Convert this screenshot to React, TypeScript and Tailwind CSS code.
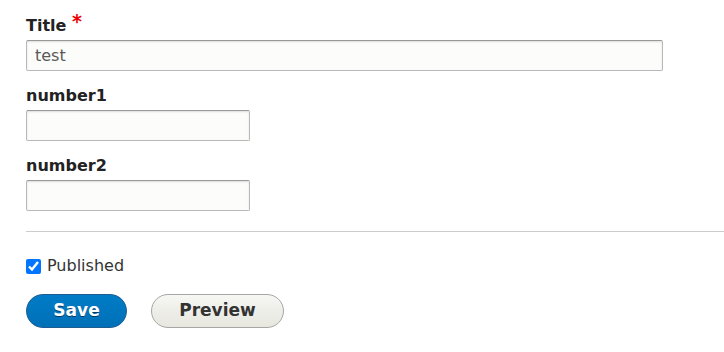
import React, { useState } from 'react';

const inputCls =
  'block h-[31px] rounded-[2px] border border-[#b8b8b8] border-t-[#999] bg-[#fcfcfa] px-[8px] text-[16px] text-[#595959] shadow-[inset_0_1px_2px_rgba(0,0,0,0.125)] outline-none';

const labelCls = 'mb-[3px] block text-[16px] font-bold leading-[22px] text-[#222]';

const App: React.FC = () => {
  const [title, setTitle] = useState('test');
  const [n1, setN1] = useState('');
  const [n2, setN2] = useState('');
  const [published, setPublished] = useState(true);

  return (
    <div className="min-h-[352px] bg-white pl-[26px] pt-[15px] text-[#333] font-['DejaVu_Sans',sans-serif]">
      <div className="mb-[14px]">
        <label className={labelCls}>
          Title <span className="relative -top-[3px] text-[19px] leading-none text-[#e00]">*</span>
        </label>
        <input className={`${inputCls} w-[637px]`} value={title} onChange={(e) => setTitle(e.target.value)} />
      </div>

      <div className="mb-[14px]">
        <label className={labelCls}>number1</label>
        <input className={`${inputCls} w-[224px]`} value={n1} onChange={(e) => setN1(e.target.value)} />
      </div>

      <div>
        <label className={labelCls}>number2</label>
        <input className={`${inputCls} w-[224px]`} value={n2} onChange={(e) => setN2(e.target.value)} />
      </div>

      <hr className="mt-[20px] border-0 border-t border-[#ccc]" />

      <label className="mt-[23px] flex items-center gap-[6px] text-[16px] leading-[22px] text-[#333]">
        <input
          type="checkbox"
          checked={published}
          onChange={(e) => setPublished(e.target.checked)}
          className="h-[15px] w-[15px] accent-[#0075ff]"
        />
        Published
      </label>

      <div className="mt-[17px] flex gap-[24px]">
        <button className="h-[34px] w-[101px] rounded-full border border-[#1e5c90] bg-gradient-to-b from-[#007bc6] to-[#0071b8] text-[17px] font-bold text-white [text-shadow:0_1px_rgba(0,0,0,0.5)]">
          Save
        </button>
        <button className="h-[34px] w-[133px] rounded-full border border-[#a6a6a6] bg-gradient-to-b from-[#f6f6f3] to-[#e7e7df] text-[17px] font-bold text-[#333]">
          Preview
        </button>
      </div>
    </div>
  );
};

export default App;
